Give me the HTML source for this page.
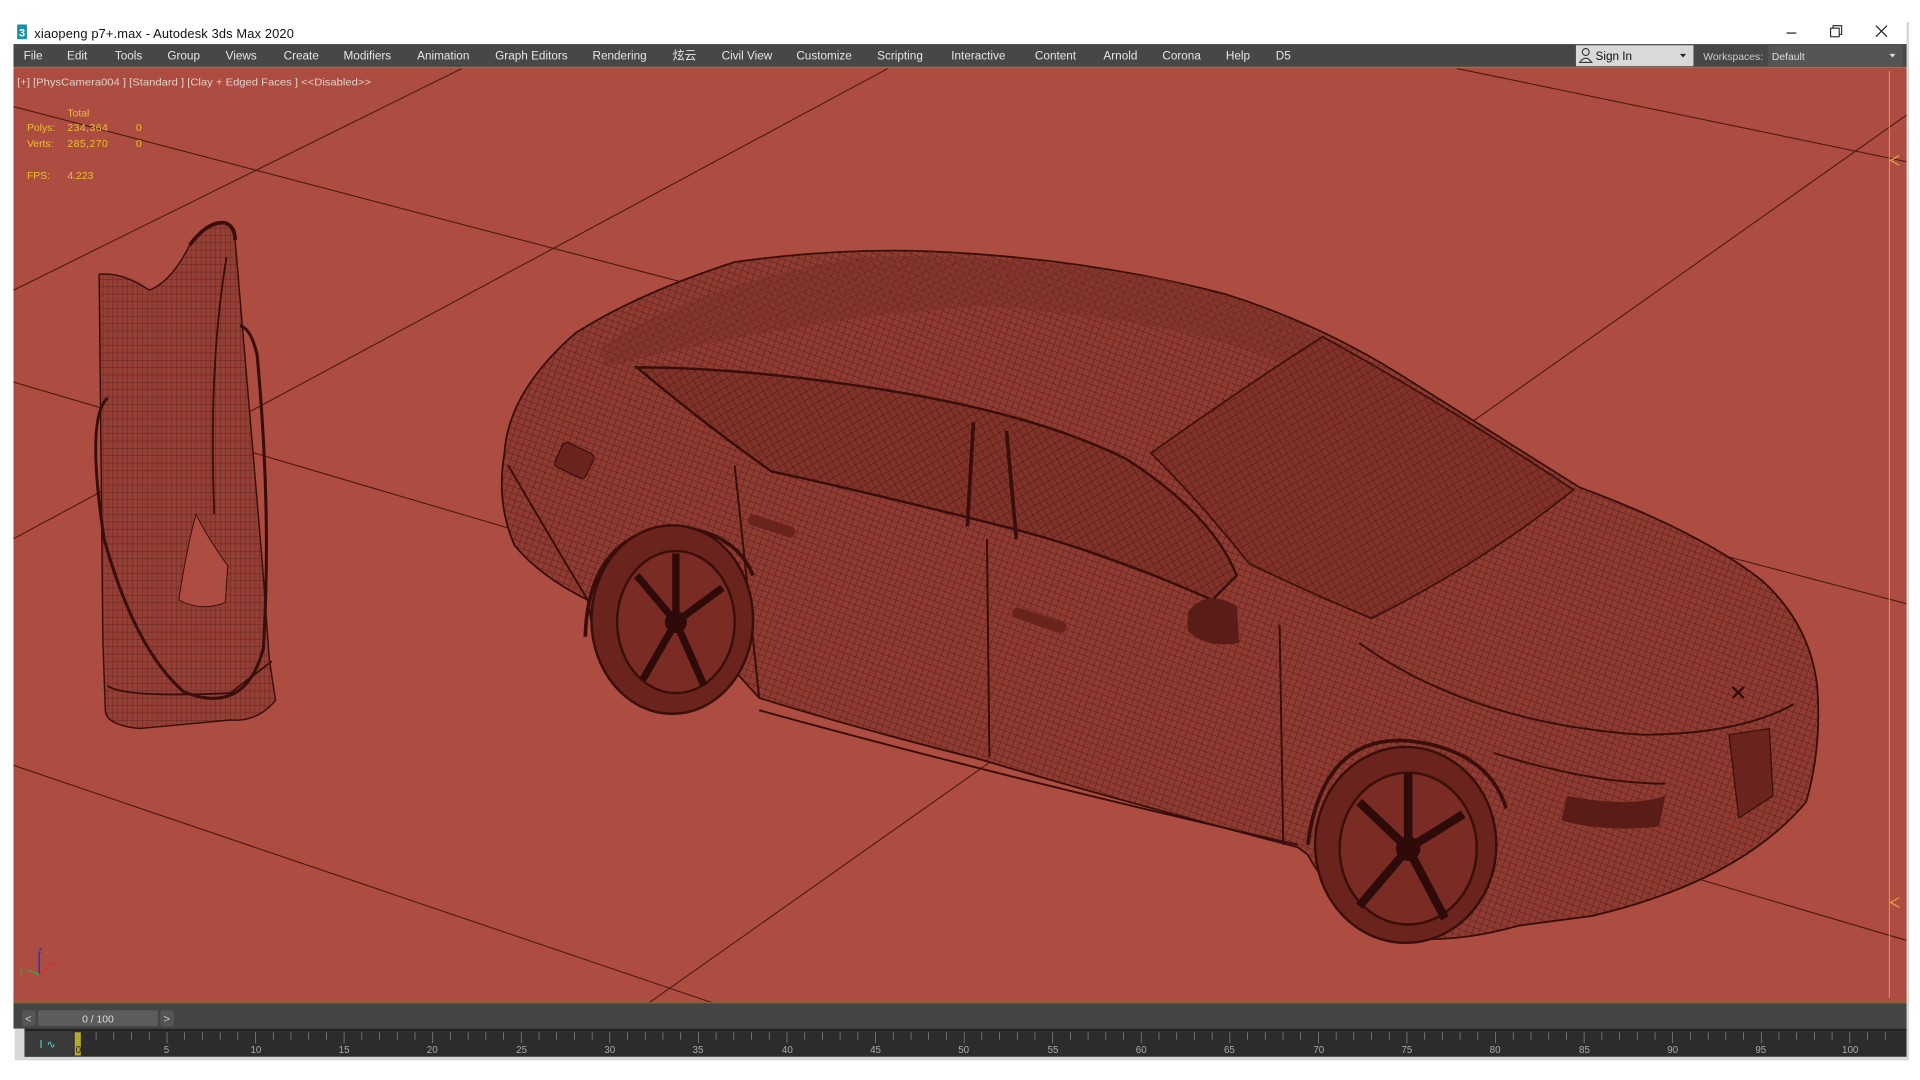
<!DOCTYPE html>
<html><head><meta charset="utf-8"><style>
html,body{margin:0;padding:0;background:#fff;width:1920px;height:1080px;overflow:hidden}
svg{display:block}
text{font-family:"Liberation Sans","Noto Sans CJK SC",sans-serif}
</style></head><body>
<svg width="1920" height="1080" viewBox="0 0 1568 882" preserveAspectRatio="none" xmlns="http://www.w3.org/2000/svg">
<defs>
<pattern id="mesh" width="5" height="5" patternUnits="userSpaceOnUse" patternTransform="rotate(20)">
<rect width="5" height="5" fill="#8f3b32"/>
<path d="M0 0H5M0 0V5" stroke="#3e100c" stroke-width="0.6" opacity="0.9"/>
</pattern>
<pattern id="mesh2" width="5" height="6" patternUnits="userSpaceOnUse" patternTransform="rotate(-30)">
<rect width="5" height="6" fill="#813229"/>
<path d="M0 0H5M0 0V6" stroke="#3a0e0a" stroke-width="0.6" opacity="0.9"/>
</pattern>
<pattern id="mesh3" width="4" height="6" patternUnits="userSpaceOnUse">
<rect width="4" height="6" fill="#933f36"/>
<path d="M0 0H4M0 0V6" stroke="#4c1510" stroke-width="0.5" opacity="0.85"/>
</pattern>
</defs>
<rect width="1568" height="882" fill="#fff"/>
<rect x="12" y="18" width="1547" height="848" fill="#d8d8d8"/>
<rect x="11" y="17" width="1546" height="19" fill="#fff"/>
<rect x="14" y="20" width="8" height="12" fill="#1a8fa8"/>
<text x="15.5" y="30" font-size="9" fill="#fff" font-weight="bold">3</text>
<text x="28" y="31" font-size="10.5" fill="#111" textLength="212">xiaopeng p7+.max - Autodesk 3ds Max 2020</text>
<path d="M1459 27h8" stroke="#222" stroke-width="1"/>
<rect x="1495" y="23" width="7" height="7" fill="none" stroke="#222" stroke-width="0.9"/>
<path d="M1497 23v-2h7v7h-2" fill="none" stroke="#222" stroke-width="0.9"/>
<path d="M1532 21l9 9M1541 21l-9 9" stroke="#222" stroke-width="1"/>
<rect x="11" y="36" width="1546" height="19" fill="#474747"/>
<g font-size="9.6" fill="#e6e6e6" text-anchor="middle">
<text x="27" y="48.5">File</text><text x="63" y="48.5">Edit</text><text x="105" y="48.5">Tools</text>
<text x="150" y="48.5">Group</text><text x="197" y="48.5">Views</text><text x="246" y="48.5">Create</text>
<text x="300" y="48.5">Modifiers</text><text x="362" y="48.5">Animation</text><text x="434" y="48.5">Graph Editors</text>
<text x="506" y="48.5">Rendering</text><text x="559" y="48.5">炫云</text><text x="610" y="48.5">Civil View</text>
<text x="673" y="48.5">Customize</text><text x="735" y="48.5">Scripting</text><text x="799" y="48.5">Interactive</text>
<text x="862" y="48.5">Content</text><text x="915" y="48.5">Arnold</text><text x="965" y="48.5">Corona</text>
<text x="1011" y="48.5">Help</text><text x="1048" y="48.5">D5</text>
</g>
<rect x="1287" y="37" width="96" height="17" fill="#d9d9d9"/>
<circle cx="1295" cy="42.5" r="2.8" fill="none" stroke="#333" stroke-width="0.9"/>
<path d="M1290 51q5-7 10 0z" fill="none" stroke="#333" stroke-width="0.9"/>
<text x="1303" y="49" font-size="9.6" fill="#111">Sign In</text>
<path d="M1372 44h5l-2.5 3z" fill="#222"/>
<text x="1391" y="49" font-size="8.5" fill="#ccc">Workspaces:</text>
<rect x="1444" y="37" width="110" height="17" fill="#555"/>
<text x="1447" y="49" font-size="8.5" fill="#ddd">Default</text>
<path d="M1543 44h5l-2.5 3z" fill="#ddd"/>
<rect x="11" y="54.5" width="1546" height="1" fill="#8a7a40"/>
<rect x="11" y="55.5" width="1546" height="763.5" fill="#ad4d42"/>
<g stroke="#4d1912" stroke-width="0.9" fill="none">
<line x1="11" y1="237" x2="377" y2="56"/>
<line x1="11" y1="440" x2="725" y2="56"/>
<line x1="11" y1="87" x2="1557" y2="493"/>
<line x1="11" y1="312" x2="1557" y2="768"/>
<line x1="11" y1="625" x2="582" y2="819"/>
<line x1="530" y1="819" x2="1557" y2="94"/>
<line x1="1190" y1="56" x2="1557" y2="132"/>
</g>
<!-- charger -->
<path d="M81 224Q100 222 122 237Q140 230 155 200Q170 180 184 182Q192 185 192 196L214 457L220 539L225 572Q210 590 188 588L114 595Q86 592 86 580L84 523Z" fill="url(#mesh3)" stroke="#3a0f0b" stroke-width="1.2"/>
<path d="M160 420Q170 440 186 462L184 492Q165 500 146 490Q152 450 160 420Z" fill="#ad4d42" stroke="#3a0f0b" stroke-width="0.8"/>
<path d="M88 560Q100 570 188 566L222 540" fill="none" stroke="#3a0f0b" stroke-width="1.5"/>
<path d="M88 325Q70 340 85 440Q110 530 150 565Q200 585 215 530Q222 420 210 290Q205 268 196 266" fill="none" stroke="#3a0f0b" stroke-width="2.5"/>
<path d="M185 210Q170 300 175 420" fill="none" stroke="#3a0f0b" stroke-width="1.5"/>
<path d="M155 200Q170 180 184 182Q192 185 192 196" fill="none" stroke="#3a0f0b" stroke-width="3"/>
<!-- car body -->
<path d="M470 272Q520 240 600 214Q700 200 790 207Q900 214 1000 240Q1080 265 1150 310Q1230 360 1290 398Q1390 435 1440 475Q1478 510 1484 560Q1488 610 1475 655Q1420 720 1300 748L1240 756Q1190 770 1150 766Q1090 740 1068 698L1060 692Q900 650 800 620Q700 595 620 570L600 548Q575 585 540 580Q495 565 485 520L480 490Q440 470 420 445Q405 410 412 370Q415 320 470 272Z" fill="url(#mesh)" stroke="#3a0f0b" stroke-width="1.5"/>
<path d="M490 285Q560 235 700 210Q820 205 950 228Q1040 250 1090 280L1060 300Q960 260 800 250Q640 262 495 300Z" fill="url(#mesh2)" opacity="0.55"/>
<path d="M520 300Q600 300 700 315Q840 335 920 375Q990 420 1010 470L990 490Q900 450 820 430Q700 400 630 385Q580 350 520 300Z" fill="url(#mesh2)" stroke="#3a0f0b" stroke-width="2"/>
<path d="M795 345L790 430M822 352L830 440" stroke="#3a0f0b" stroke-width="3"/>
<path d="M940 370Q1010 320 1080 275Q1180 330 1285 400Q1210 460 1120 505Q1060 480 1020 460Q980 410 940 370Z" fill="url(#mesh2)" stroke="#3a0f0b" stroke-width="1.5" opacity="0.9"/>
<g fill="none" stroke="#3a0f0b" stroke-width="1.6">
<path d="M620 570L600 380"/>
<path d="M808 618L806 440"/>
<path d="M1048 690L1045 510"/>
<path d="M1110 525Q1200 590 1340 600Q1420 600 1465 575"/>
<path d="M1220 615Q1300 640 1360 640"/>
<path d="M415 380Q450 440 480 490"/>
<path d="M620 580Q800 630 1060 690"/>
</g>
<rect x="455" y="365" width="28" height="22" rx="4" transform="rotate(25 469 376)" fill="#6a241d" stroke="#3a0f0b"/>
<rect x="610" y="425" width="40" height="9" rx="4" transform="rotate(18 630 430)" fill="#6a241d"/>
<rect x="826" y="502" width="46" height="9" rx="4" transform="rotate(18 849 506)" fill="#6a241d"/>
<path d="M970 500Q985 480 1010 495L1012 525Q985 530 970 515Z" fill="#5a1c16"/>
<path d="M1412 600L1445 595L1448 650L1420 668Z" fill="#6a241d" stroke="#3a0f0b"/>
<path d="M1280 650Q1330 660 1360 650L1355 675Q1310 680 1275 670Z" fill="#5a1c16"/>
<text x="1412" y="572" font-size="18" fill="#2a0a08">✕</text>
<!-- wheel arches -->
<path d="M478 520Q480 440 545 430Q600 432 615 470" fill="none" stroke="#3a0f0b" stroke-width="3"/>
<path d="M1068 690Q1080 600 1150 605Q1215 612 1230 660" fill="none" stroke="#3a0f0b" stroke-width="3"/>
<ellipse cx="549" cy="506" rx="66" ry="77" fill="#6a241d" stroke="#3a0f0b" stroke-width="2"/>
<ellipse cx="552" cy="508" rx="48" ry="58" fill="#7a2c24" stroke="#3a0f0b" stroke-width="2"/>
<g stroke="#2e0b08" stroke-width="6"><path d="M552 508L520 470M552 508L590 480M552 508L575 560M552 508L525 555M552 508L552 452"/></g>
<circle cx="552" cy="508" r="9" fill="#2e0b08"/>
<ellipse cx="1148" cy="690" rx="74" ry="80" fill="#6a241d" stroke="#3a0f0b" stroke-width="2"/>
<ellipse cx="1150" cy="693" rx="56" ry="62" fill="#7a2c24" stroke="#3a0f0b" stroke-width="2"/>
<g stroke="#2e0b08" stroke-width="7"><path d="M1150 693L1110 655M1150 693L1195 665M1150 693L1180 750M1150 693L1110 740M1150 693L1150 632"/></g>
<circle cx="1150" cy="693" r="10" fill="#2e0b08"/>
<line x1="1543" y1="58" x2="1543" y2="815" stroke="#d8a040" stroke-width="0.8"/>
<path d="M1551 127l-7 4 7 4" fill="none" stroke="#e8b040" stroke-width="0.9"/>
<path d="M1551 733l-7 4 7 4" fill="none" stroke="#e8b040" stroke-width="0.9"/>
<text x="14" y="70" font-size="8.5" fill="#e0d0c8" textLength="289" lengthAdjust="spacingAndGlyphs">[+] [PhysCamera004 ] [Standard ] [Clay + Edged Faces ]  &lt;&lt;Disabled&gt;&gt;</text>
<g font-size="8.5" fill="#e8c030">
<text x="55" y="95">Total</text>
<text x="22" y="107">Polys:</text><text x="55" y="107" textLength="33">234,364</text><text x="111" y="107">0</text>
<text x="22" y="120">Verts:</text><text x="55" y="120" textLength="33">285,270</text><text x="111" y="120">0</text>
<text x="22" y="146">FPS:</text><text x="55" y="146">4.223</text>
</g>
<path d="M32 796V778" stroke="#3030c0" stroke-width="1.2"/>
<path d="M32 796L43 786" stroke="#d03030" stroke-width="1.2"/>
<path d="M32 796L22 792" stroke="#40a040" stroke-width="1.2"/>
<text x="31" y="778" font-size="7" fill="#3030c0">z</text>
<text x="44" y="790" font-size="7" fill="#d03030">x</text>
<text x="16" y="796" font-size="7" fill="#40a040">y</text>
<rect x="11" y="819" width="1546" height="21" fill="#444"/>
<rect x="11" y="818.5" width="1546" height="1" fill="#7a6a38"/>
<rect x="18" y="825" width="11" height="13" rx="2" fill="#555"/>
<text x="20.5" y="835" font-size="9" fill="#ccc">&lt;</text>
<rect x="31" y="825" width="98" height="13" rx="2" fill="#5c5c5c"/>
<text x="80" y="835" font-size="8.5" fill="#ddd" text-anchor="middle">0 / 100</text>
<rect x="131" y="825" width="11" height="13" rx="2" fill="#555"/>
<text x="133.5" y="835" font-size="9" fill="#ccc">&gt;</text>
<rect x="20" y="842" width="1537" height="21" fill="#2c2c2c"/>
<rect x="20" y="840" width="1537" height="2" fill="#222"/>
<rect x="20" y="842" width="40" height="21" fill="#3a3a3a"/>
<text x="29" y="856" font-size="9" fill="#5ad0d0">Ⅰ∿</text>
<rect x="61" y="843" width="5" height="19" fill="#b8a830"/>
<g stroke="#888" stroke-width="0.6">
<path d="M78.5 843v6M92.9 843v6M107.4 843v6M121.9 843v6M136.4 843v9M150.8 843v6M165.3 843v6M179.8 843v6M194.2 843v6M208.7 843v9M223.2 843v6M237.6 843v6M252.1 843v6M266.6 843v6M281 843v9M295.5 843v6M310 843v6M324.4 843v6M338.9 843v6M353.4 843v9M367.8 843v6M382.3 843v6M396.8 843v6M411.2 843v6M425.7 843v9M440.2 843v6M454.6 843v6M469.1 843v6M483.6 843v6M498 843v9M512.5 843v6M527 843v6M541.4 843v6M555.9 843v6M570.4 843v9M584.8 843v6M599.3 843v6M613.8 843v6M628.2 843v6M642.7 843v9M657.2 843v6M671.6 843v6M686.1 843v6M700.6 843v6M715 843v9M729.5 843v6M744 843v6M758.4 843v6M772.9 843v6M787.4 843v9M801.8 843v6M816.3 843v6M830.8 843v6M845.2 843v6M859.7 843v9M874.2 843v6M888.6 843v6M903.1 843v6M917.6 843v6M932 843v9M946.5 843v6M961 843v6M975.4 843v6M989.9 843v6M1004.4 843v9M1018.8 843v6M1033.3 843v6M1047.8 843v6M1062.2 843v6M1076.7 843v9M1091.2 843v6M1105.6 843v6M1120.1 843v6M1134.6 843v6M1149 843v9M1163.5 843v6M1178 843v6M1192.4 843v6M1206.9 843v6M1221.4 843v9M1235.8 843v6M1250.3 843v6M1264.8 843v6M1279.2 843v6M1293.7 843v9M1308.2 843v6M1322.6 843v6M1337.1 843v6M1351.6 843v6M1366 843v9M1380.5 843v6M1395 843v6M1409.4 843v6M1423.9 843v6M1438.4 843v9M1452.8 843v6M1467.3 843v6M1481.8 843v6M1496.2 843v6M1510.7 843v9M1525.2 843v6M1539.6 843v6"/>
</g>
<g font-size="8" fill="#aaa" text-anchor="middle">
<text x="64" y="860" fill="#222">0</text><text x="136" y="860">5</text><text x="209" y="860">10</text><text x="281" y="860">15</text>
<text x="353" y="860">20</text><text x="426" y="860">25</text><text x="498" y="860">30</text><text x="570" y="860">35</text>
<text x="643" y="860">40</text><text x="715" y="860">45</text><text x="787" y="860">50</text><text x="860" y="860">55</text>
<text x="932" y="860">60</text><text x="1004" y="860">65</text><text x="1077" y="860">70</text><text x="1149" y="860">75</text>
<text x="1221" y="860">80</text><text x="1294" y="860">85</text><text x="1366" y="860">90</text><text x="1438" y="860">95</text>
<text x="1511" y="860">100</text>
</g>
</svg>
</body></html>
